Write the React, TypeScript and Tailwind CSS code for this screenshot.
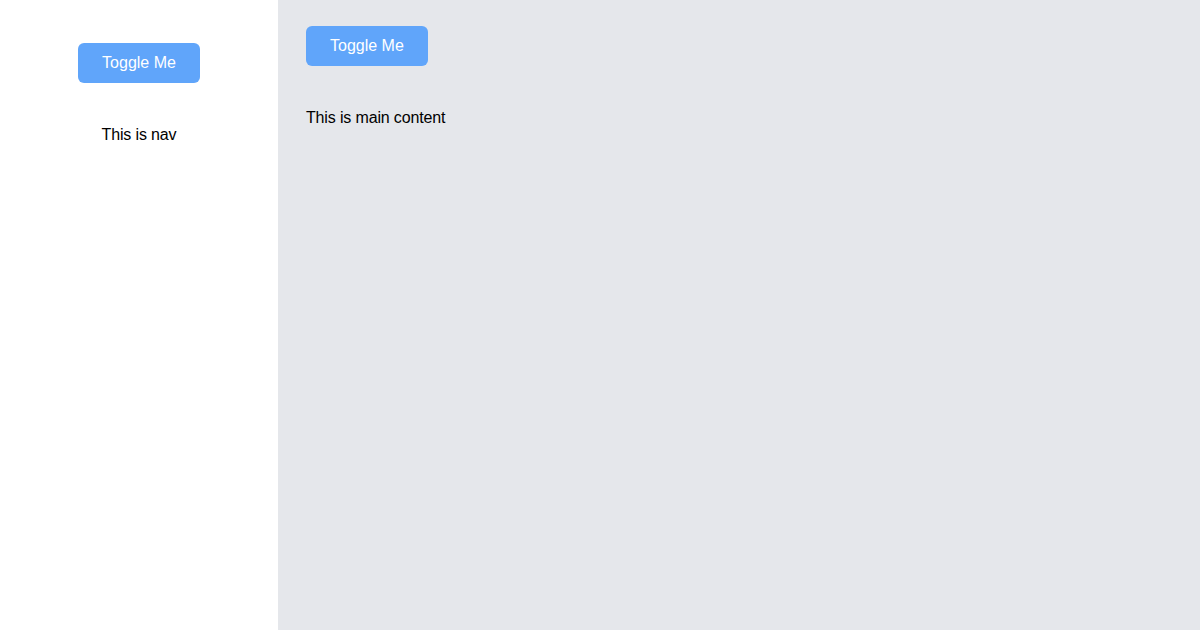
export default function App() {
  return (
    <div className="flex h-[630px] w-full font-['Liberation_Sans',Arial,sans-serif] text-base text-black">
      <nav className="flex w-[278px] shrink-0 flex-col items-center bg-white pt-[43px]">
        <button className="rounded-md bg-[#60a5fa] px-6 py-2 text-white">Toggle Me</button>
        <p className="mt-10 tracking-[-0.15px]">This is nav</p>
      </nav>
      <main className="flex flex-1 flex-col items-start bg-[#e5e7eb] pl-7 pt-[26px]">
        <button className="rounded-md bg-[#60a5fa] px-6 py-2 text-white">Toggle Me</button>
        <p className="mt-10 tracking-[-0.15px]">This is main content</p>
      </main>
    </div>
  );
}
